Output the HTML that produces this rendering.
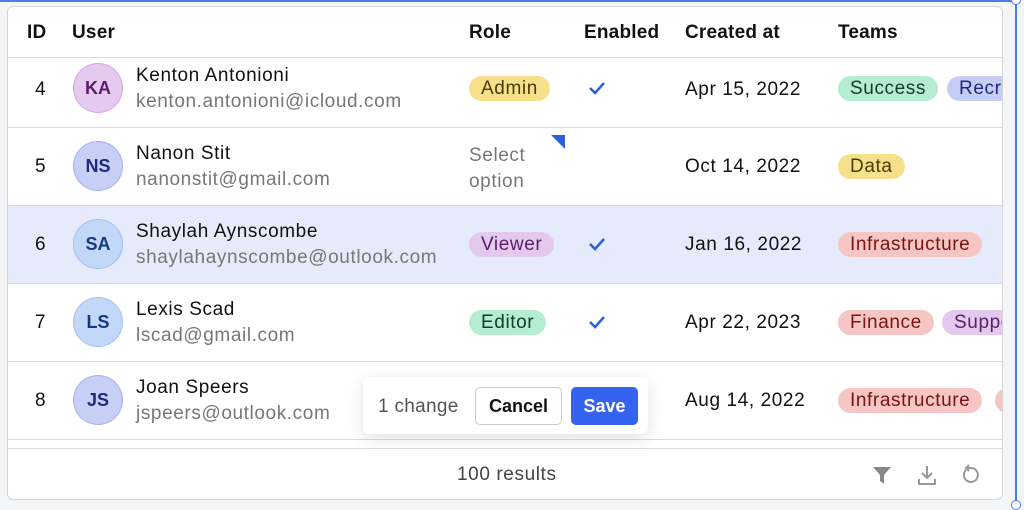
<!DOCTYPE html><html><head><style>
*{box-sizing:border-box;margin:0;padding:0}
body{width:1024px;height:506px;background:#f4f5f7;font-family:"Liberation Sans",sans-serif;position:relative;overflow:hidden;color:#111}
.sel{position:absolute;left:0;top:0;width:1017px;height:506px;border-top:2px solid #4a7cf0;border-right:2px solid #4a7cf0}
.h{position:absolute;width:10px;height:10px;border:1.5px solid #4a7cf0;border-radius:50%;background:#fff}
.card{position:absolute;left:7px;top:6px;width:996px;height:494px;background:#fff;border:1px solid #d6d6d6;border-radius:6px;overflow:hidden}
.row{position:absolute;left:0;width:996px;border-bottom:1px solid #dcdcdc}
.t{position:absolute;font-size:19px;letter-spacing:.6px;white-space:nowrap}
.b{font-weight:bold;letter-spacing:.2px}
.av{position:absolute;left:65px;width:50px;height:50px;border-radius:50%;font-weight:bold;font-size:18px;display:flex;align-items:center;justify-content:center}
.pill{position:absolute;height:25px;border-radius:13px;font-size:19px;letter-spacing:.6px;padding:0 12px;line-height:25px;white-space:nowrap}
.g{color:#777}
.ck{position:absolute;left:580px}
</style></head><body>
<div class="sel"></div>
<div class="h" style="left:1011px;top:-5px"></div>
<div class="h" style="left:1011px;top:500px"></div>
<div class="card">
<div class="row" style="top:0;height:51px">
<div class="t b" style="left:19px;top:15px">ID</div>
<div class="t b" style="left:64px;top:15px">User</div>
<div class="t b" style="left:461px;top:15px">Role</div>
<div class="t b" style="left:576px;top:15px">Enabled</div>
<div class="t b" style="left:677px;top:15px">Created at</div>
<div class="t b" style="left:830px;top:15px">Teams</div>
</div>
<div class="row" style="top:51px;height:70px">
<div class="t" style="left:27px;top:21px">4</div>
<div class="av" style="top:5px;background:#e6c9ee;color:#5a1d6a;border:1px solid #d3a8e0">KA</div>
<div class="t" style="left:128px;top:7px">Kenton Antonioni</div>
<div class="t g" style="left:128px;top:33px">kenton.antonioni@icloud.com</div>
<div class="pill" style="left:461px;top:18px;background:#f7e08a;color:#4a3a00">Admin</div>
<svg class="ck" style="top:23px" width="18" height="14"><path d="M2 7l5 5 9-10" stroke="#2e5fe0" stroke-width="2.5" fill="none"/></svg>
<div class="t" style="left:677px;top:21px">Apr 15, 2022</div>
<div class="pill" style="left:830px;top:18px;background:#b4edcf;color:#0f3d22">Success</div>
<div class="pill" style="left:939px;top:18px;background:#c5cdf6;color:#1c2a80">Recruiting</div>
</div>
<div class="row" style="top:121px;height:78px">
<div class="t" style="left:27px;top:28px">5</div>
<div class="av" style="top:13px;background:#c7cff7;color:#1d2a80;border:1px solid #a5b2ee">NS</div>
<div class="t" style="left:128px;top:15px">Nanon Stit</div>
<div class="t g" style="left:128px;top:41px">nanonstit@gmail.com</div>
<div class="t g" style="left:461px;top:15px;line-height:26px">Select<br>option</div>
<svg style="position:absolute;left:543px;top:7px" width="14" height="14"><path d="M0 0H14V14Z" fill="#2e5fe0"/></svg>
<div class="t" style="left:677px;top:28px">Oct 14, 2022</div>
<div class="pill" style="left:830px;top:26px;background:#f7e08a;color:#4a3a00">Data</div>
</div>
<div class="row" style="top:199px;height:78px;background:#e6ebfb">
<div class="t" style="left:27px;top:28px">6</div>
<div class="av" style="top:13px;background:#c3d8f9;color:#143a80;border:1px solid #a0c0f0">SA</div>
<div class="t" style="left:128px;top:15px">Shaylah Aynscombe</div>
<div class="t g" style="left:128px;top:41px">shaylahaynscombe@outlook.com</div>
<div class="pill" style="left:461px;top:26px;background:#e3c9ee;color:#5a1d6a">Viewer</div>
<svg class="ck" style="top:31px" width="18" height="14"><path d="M2 7l5 5 9-10" stroke="#2e5fe0" stroke-width="2.5" fill="none"/></svg>
<div class="t" style="left:677px;top:28px">Jan 16, 2022</div>
<div class="pill" style="left:830px;top:26px;background:#f5c6c4;color:#7a1212">Infrastructure</div>
</div>
<div class="row" style="top:277px;height:78px">
<div class="t" style="left:27px;top:28px">7</div>
<div class="av" style="top:13px;background:#c3d8f9;color:#143a80;border:1px solid #a0c0f0">LS</div>
<div class="t" style="left:128px;top:15px">Lexis Scad</div>
<div class="t g" style="left:128px;top:41px">lscad@gmail.com</div>
<div class="pill" style="left:461px;top:26px;background:#b4edcf;color:#0f3d22">Editor</div>
<svg class="ck" style="top:31px" width="18" height="14"><path d="M2 7l5 5 9-10" stroke="#2e5fe0" stroke-width="2.5" fill="none"/></svg>
<div class="t" style="left:677px;top:28px">Apr 22, 2023</div>
<div class="pill" style="left:830px;top:26px;background:#f5c6c4;color:#7a1212">Finance</div>
<div class="pill" style="left:934px;top:26px;background:#e3c9ee;color:#5a1d6a">Support</div>
</div>
<div class="row" style="top:355px;height:78px">
<div class="t" style="left:27px;top:28px">8</div>
<div class="av" style="top:13px;background:#c7cff7;color:#1d2a80;border:1px solid #a5b2ee">JS</div>
<div class="t" style="left:128px;top:15px">Joan Speers</div>
<div class="t g" style="left:128px;top:41px">jspeers@outlook.com</div>
<div class="t" style="left:677px;top:28px">Aug 14, 2022</div>
<div class="pill" style="left:830px;top:26px;background:#f5c6c4;color:#7a1212">Infrastructure</div>
<div class="pill" style="left:987px;top:26px;background:#f5c6c4;color:#7a1212">X</div>
</div>
<div style="position:absolute;left:0;top:441px;width:996px;border-top:1px solid #dcdcdc"></div>
<div class="t" style="left:449px;top:457px;color:#444">100 results</div>
<svg style="position:absolute;left:864px;top:458px" width="20" height="20"><path d="M1 2H19L12 10V19L8 16V10Z" fill="#888"/></svg>
<svg style="position:absolute;left:909px;top:457px" width="20" height="22"><path d="M10 2V13M5 9l5 5 5-5M2 15V20H18V15" stroke="#999" stroke-width="2" fill="none"/></svg>
<svg style="position:absolute;left:953px;top:457px" width="20" height="22"><path d="M5 6A7 7 0 1 0 10 4H6M8 1L5 4 8 7" stroke="#999" stroke-width="2" fill="none"/></svg>
</div>
<div style="position:absolute;left:363px;top:377px;width:285px;height:57px;background:#fff;border-radius:6px;box-shadow:0 4px 16px rgba(0,0,0,.12)">
<div class="t" style="left:15px;top:19px;color:#555;letter-spacing:.3px">1 change</div>
<div style="position:absolute;left:112px;top:10px;width:87px;height:38px;border:1px solid #ccc;border-radius:5px;font-weight:bold;font-size:18px;text-align:center;line-height:36px">Cancel</div>
<div style="position:absolute;left:208px;top:10px;width:67px;height:38px;background:#3563ef;border-radius:5px;font-weight:bold;font-size:18px;text-align:center;line-height:38px;color:#fff">Save</div>
</div>
</body></html>
